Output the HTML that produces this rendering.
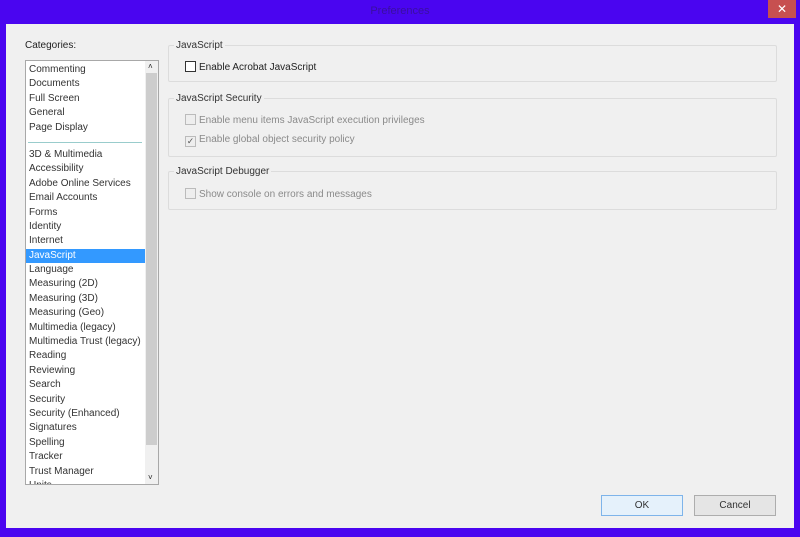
<!DOCTYPE html><html><head><style>
body{margin:0;width:800px;height:537px;background:#4a05f0;font-family:"Liberation Sans",sans-serif;font-size:10px;color:#222;position:relative;overflow:hidden}
.win{position:absolute;left:6px;top:24px;width:788px;height:504px;background:#f0f0f0}
.title{position:absolute;top:5px;left:0;width:800px;text-align:center;color:#3a10a0;font-size:11px}
.x{position:absolute;left:768px;top:0;width:28px;height:18px;background:#c75050;color:#fff;text-align:center;font-size:12px;line-height:18px}
.a{position:absolute}
.list{position:absolute;left:25px;top:60px;width:132px;height:423px;background:#fff;border:1px solid #a8a8a8;overflow:hidden}
.it{height:14.4px;line-height:14.4px;padding-left:3px;font-size:10px;white-space:nowrap;color:#333}
.sel{background:#3399ff;color:#fff;width:116px}
.sb{position:absolute;right:0;top:0;width:13px;height:423px;background:#f0f0f0}
.th{position:absolute;right:1px;top:12px;width:11px;height:372px;background:#cdcdcd}
.grp{position:absolute;left:168px;width:607px;border:1px solid #dcdcdc;border-radius:2px}
.gt{position:absolute;left:5px;top:-6px;background:#f0f0f0;padding:0 2px;color:#333}
.cb{display:inline-block;width:9px;height:9px;border:1px solid #333;background:#fff;vertical-align:-2px;margin-right:3px;font-size:9px;line-height:9px;text-align:center}
.dis{color:#8a8a8a}.dis .cb{border-color:#bbb;background:#eee;color:#555}
.btn{position:absolute;top:495px;width:80px;height:19px;border:1px solid #adadad;background:#e5e5e5;text-align:center;line-height:19px;color:#333}
</style></head><body>
<div class="title">Preferences</div><div class="x">✕</div>
<div class="win"></div>
<div class="a" style="left:25px;top:40px">Categories:</div>
<div class="list">
<div style="height:2px"></div>
<div class="it">Commenting</div><div class="it">Documents</div><div class="it">Full Screen</div><div class="it">General</div><div class="it">Page Display</div>
<div style="height:7px;border-bottom:1px solid #9cc;width:114px;margin-left:2px;margin-bottom:5px"></div>
<div class="it">3D &amp; Multimedia</div><div class="it">Accessibility</div><div class="it">Adobe Online Services</div><div class="it">Email Accounts</div><div class="it">Forms</div><div class="it">Identity</div><div class="it">Internet</div><div class="it sel">JavaScript</div><div class="it">Language</div><div class="it">Measuring (2D)</div><div class="it">Measuring (3D)</div><div class="it">Measuring (Geo)</div><div class="it">Multimedia (legacy)</div><div class="it">Multimedia Trust (legacy)</div><div class="it">Reading</div><div class="it">Reviewing</div><div class="it">Search</div><div class="it">Security</div><div class="it">Security (Enhanced)</div><div class="it">Signatures</div><div class="it">Spelling</div><div class="it">Tracker</div><div class="it">Trust Manager</div><div class="it">Units</div>
<div class="sb"><div class="th"></div><div style="position:absolute;top:1px;left:3px;font-size:8px">˄</div><div style="position:absolute;bottom:2px;left:3px;font-size:8px">˅</div></div>
</div>
<div class="grp" style="top:45px;height:35px"><span class="gt">JavaScript</span>
<div class="a" style="left:16px;top:15px"><span class="cb"></span>Enable Acrobat JavaScript</div></div>
<div class="grp" style="top:98px;height:57px"><span class="gt">JavaScript Security</span>
<div class="a dis" style="left:16px;top:15px"><span class="cb"></span>Enable menu items JavaScript execution privileges</div>
<div class="a dis" style="left:16px;top:35px"><span class="cb">✓</span>Enable global object security policy</div></div>
<div class="grp" style="top:171px;height:37px"><span class="gt">JavaScript Debugger</span>
<div class="a dis" style="left:16px;top:16px"><span class="cb"></span>Show console on errors and messages</div></div>
<div class="btn" style="left:601px;border-color:#7eb4ea;background:#e5f1fb">OK</div>
<div class="btn" style="left:694px">Cancel</div>
</body></html>
